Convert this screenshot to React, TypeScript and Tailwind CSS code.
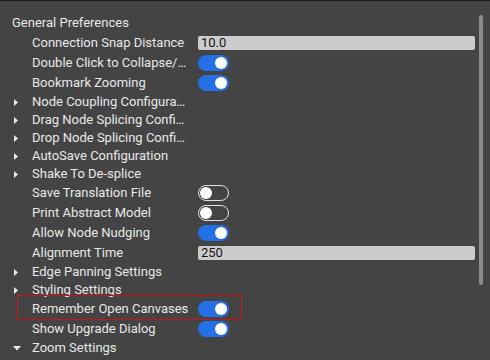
import React from "react";

type Kind = "input" | "on" | "off" | "closed" | "open";
type Row = { label: string; kind: Kind; value?: string; highlight?: boolean };

const rows: Row[] = [
  { label: "Connection Snap Distance", kind: "input", value: "10.0" },
  { label: "Double Click to Collapse/…", kind: "on" },
  { label: "Bookmark Zooming", kind: "on" },
  { label: "Node Coupling Configura…", kind: "closed" },
  { label: "Drag Node Splicing Confi…", kind: "closed" },
  { label: "Drop Node Splicing Confi…", kind: "closed" },
  { label: "AutoSave Configuration", kind: "closed" },
  { label: "Shake To De-splice", kind: "closed" },
  { label: "Save Translation File", kind: "off" },
  { label: "Print Abstract Model", kind: "off" },
  { label: "Allow Node Nudging", kind: "on" },
  { label: "Alignment Time", kind: "input", value: "250" },
  { label: "Edge Panning Settings", kind: "closed" },
  { label: "Styling Settings", kind: "closed" },
  { label: "Remember Open Canvases", kind: "on", highlight: true },
  { label: "Show Upgrade Dialog", kind: "on" },
  { label: "Zoom Settings", kind: "open" },
];

function Toggle({ on }: { on: boolean }) {
  return on ? (
    <div className="w-[31px] h-[16px] rounded-full bg-[#2470e4] flex items-center justify-end pr-[2px]">
      <div className="w-[12px] h-[12px] rounded-full bg-white" />
    </div>
  ) : (
    <div className="w-[31px] h-[16px] rounded-full border border-[#e0e0e0] flex items-center pl-[1px]">
      <div className="w-[12px] h-[12px] rounded-full bg-white" />
    </div>
  );
}

function Arrow({ open }: { open: boolean }) {
  return open ? (
    <svg width="8" height="5" viewBox="0 0 8 5">
      <polygon points="0,0 8,0 4,4.5" fill="#e8e8e8" />
    </svg>
  ) : (
    <svg width="4" height="7" viewBox="0 0 4 7">
      <polygon points="0,0 4,3.5 0,7" fill="#e8e8e8" />
    </svg>
  );
}

function SettingRow({ row }: { row: Row }) {
  const expander = row.kind === "closed" || row.kind === "open";
  return (
    <div className={`relative flex items-center ${expander ? "h-[18px]" : "h-[20px]"}`}>
      <div className={`w-[32px] flex items-center ${row.kind === "open" ? "pl-[13px]" : "pl-[14px]"}`}>
        {expander && <Arrow open={row.kind === "open"} />}
      </div>
      <div className="w-[166px] whitespace-nowrap overflow-hidden">{row.label}</div>
      {row.kind === "input" && (
        <div className="w-[277px] h-[14px] bg-[#cccccc] rounded-[2px] text-[#141414] pl-[3px] leading-[14px]">
          {row.value}
        </div>
      )}
      {(row.kind === "on" || row.kind === "off") && <Toggle on={row.kind === "on"} />}
      {row.highlight && (
        <div className="absolute left-[17px] top-[-4px] w-[225px] h-[25px] border border-[#c81414] pointer-events-none" />
      )}
    </div>
  );
}

export default function App() {
  return (
    <div className="relative w-[490px] h-[360px] overflow-hidden bg-[#444444] border-t border-[#1c1c1c] text-[13px] text-[#e8e8e8] font-['Roboto',sans-serif]">
      <div className="absolute left-[479px] top-[14px] w-[4px] h-[270px] rounded-[2px] bg-[#8c8c8c]" />
      <div className="pt-[11px]">
        <div className="h-[21px] flex items-center pl-[12px]">General Preferences</div>
        {rows.map((r, i) => (
          <SettingRow key={i} row={r} />
        ))}
      </div>
    </div>
  );
}
